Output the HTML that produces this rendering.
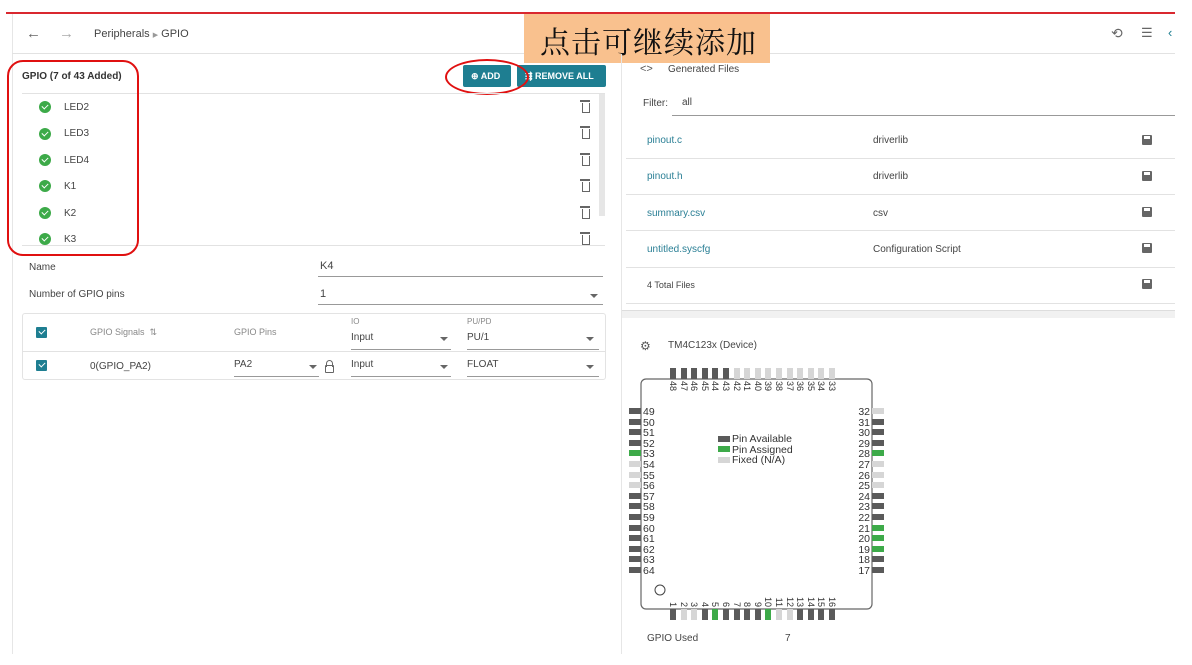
<!DOCTYPE html>
<html><head><meta charset="utf-8"><style>
*{margin:0;padding:0;box-sizing:border-box}
body{width:1192px;height:665px;background:#fff;position:relative;overflow:hidden;font-family:"Liberation Sans",sans-serif;color:#333}
.a{position:absolute}
.t{font-size:10px;color:#444}
.lnk{color:#2a7f95;font-size:10px}
.hl{height:1px;background:#e2e2e2}
.ck{width:12px;height:12px;border-radius:50%;background:#3daa49}
.ck::after{content:"";position:absolute;left:3px;top:3px;width:5px;height:3px;border-left:1.6px solid #fff;border-bottom:1.6px solid #fff;transform:rotate(-45deg)}
.tr{width:8px;height:10px;border:1.3px solid #666;border-top:none}
.tr::before{content:"";position:absolute;left:-3px;top:-3px;width:10px;height:1.5px;background:#666}
.ul{height:1px;background:#999}
.dd{width:0;height:0;border-left:4px solid transparent;border-right:4px solid transparent;border-top:4px solid #666}
.cb{width:11px;height:11px;background:#1e7e91;border-radius:1px}
.cb::after{content:"";position:absolute;left:3px;top:2px;width:5px;height:3px;border-left:1.5px solid #fff;border-bottom:1.5px solid #fff;transform:rotate(-45deg)}
.sv{width:10px;height:10px;background:#666;border-radius:1px}
.sv::after{content:"";position:absolute;left:2px;top:1px;width:6px;height:3px;background:#fff}
</style></head><body>
<div class="a" style="left:6px;top:12px;width:1169px;height:2px;background:#d9282f"></div>
<div class="a" style="left:12px;top:14px;width:1px;height:640px;background:#e6e6e6"></div>
<div class="a hl" style="left:12px;top:53px;width:1163px"></div>
<div class="a" style="left:26px;top:25px;font-size:15px;color:#666">←</div>
<div class="a" style="left:59px;top:25px;font-size:15px;color:#aaa">→</div>
<div class="a t" style="left:94px;top:28px;font-size:11px">Peripherals <span style="font-size:7px;color:#999">▶</span> GPIO</div>
<div class="a" style="left:524px;top:14px;width:246px;height:49px;background:#f9c18e"></div>
<div class="a" style="left:540px;top:18px;font-size:30px;color:#111;font-family:'Noto Serif CJK SC','Noto Sans CJK SC',serif;letter-spacing:1px">点击可继续添加</div>
<div class="a" style="left:1111px;top:25px;font-size:14px;color:#666">⟲</div>
<div class="a" style="left:1141px;top:25px;font-size:13px;color:#666">☰</div>
<div class="a" style="left:1168px;top:25px;font-size:13px;color:#1e7e91">‹</div>

<div class="a" style="left:22px;top:71px;font-size:10px;color:#333;font-weight:bold">GPIO (7 of 43 Added)</div>
<div class="a" style="left:463px;top:65px;width:48px;height:22px;background:#1e7e91;border-radius:2px;color:#fff;font-size:9px;font-weight:bold;line-height:22px;padding-left:8px">⊕ ADD</div>
<div class="a" style="left:517px;top:65px;width:89px;height:22px;background:#1e7e91;border-radius:2px;color:#fff;font-size:9px;font-weight:bold;line-height:22px;padding-left:8px">⇶ REMOVE ALL</div>
<div class="a" style="left:445px;top:59px;width:84px;height:36px;border:2px solid #e01010;border-radius:50%"></div>
<div class="a hl" style="left:22px;top:93px;width:583px"></div>
<div class="a" style="left:599px;top:94px;width:6px;height:122px;background:#e6e6e6"></div>
<div class="a ck" style="left:39px;top:101px"></div><div class="a t" style="left:64px;top:102px">LED2</div><div class="a tr" style="left:582px;top:103px"></div>
<div class="a ck" style="left:39px;top:128px"></div><div class="a t" style="left:64px;top:128px">LED3</div><div class="a tr" style="left:582px;top:129px"></div>
<div class="a ck" style="left:39px;top:154px"></div><div class="a t" style="left:64px;top:155px">LED4</div><div class="a tr" style="left:582px;top:156px"></div>
<div class="a ck" style="left:39px;top:180px"></div><div class="a t" style="left:64px;top:181px">K1</div><div class="a tr" style="left:582px;top:182px"></div>
<div class="a ck" style="left:39px;top:207px"></div><div class="a t" style="left:64px;top:208px">K2</div><div class="a tr" style="left:582px;top:209px"></div>
<div class="a ck" style="left:39px;top:233px"></div><div class="a t" style="left:64px;top:234px">K3</div><div class="a tr" style="left:582px;top:235px"></div>
<div class="a hl" style="left:22px;top:245px;width:583px"></div>
<div class="a" style="left:7px;top:60px;width:132px;height:196px;border:2px solid #e01010;border-radius:16px"></div>

<div class="a t" style="left:29px;top:262px">Name</div>
<div class="a t" style="left:320px;top:260px;font-size:11px">K4</div>
<div class="a ul" style="left:318px;top:276px;width:285px"></div>
<div class="a t" style="left:29px;top:289px">Number of GPIO pins</div>
<div class="a t" style="left:320px;top:288px;font-size:11px">1</div>
<div class="a dd" style="left:590px;top:294px"></div>
<div class="a ul" style="left:318px;top:304px;width:285px"></div>
<div class="a" style="left:22px;top:313px;width:584px;height:67px;border:1px solid #e3e3e3;border-radius:3px"></div>
<div class="a hl" style="left:22px;top:351px;width:584px"></div>
<div class="a cb" style="left:36px;top:327px"></div>
<div class="a t" style="left:90px;top:327px;color:#888;font-size:9px">GPIO Signals &nbsp;⇅</div>
<div class="a t" style="left:234px;top:327px;color:#888;font-size:9px">GPIO Pins</div>
<div class="a t" style="left:351px;top:317px;color:#888;font-size:8px">IO</div>
<div class="a t" style="left:351px;top:332px;font-size:10px">Input</div><div class="a dd" style="left:440px;top:337px"></div><div class="a ul" style="left:351px;top:349px;width:100px"></div>
<div class="a t" style="left:467px;top:317px;color:#888;font-size:8px">PU/PD</div>
<div class="a t" style="left:467px;top:332px;font-size:10px">PU/1</div><div class="a dd" style="left:586px;top:337px"></div><div class="a ul" style="left:467px;top:349px;width:132px"></div>
<div class="a cb" style="left:36px;top:360px"></div>
<div class="a t" style="left:90px;top:361px">0(GPIO_PA2)</div>
<div class="a t" style="left:234px;top:359px">PA2</div><div class="a dd" style="left:309px;top:365px"></div><div class="a ul" style="left:234px;top:376px;width:85px"></div>
<div class="a" style="left:325px;top:360px;width:9px;height:13px">
<div class="a" style="left:1px;top:0;width:7px;height:7px;border:1.3px solid #666;border-bottom:none;border-radius:4px 4px 0 0"></div>
<div class="a" style="left:0;top:5px;width:9px;height:8px;border:1.3px solid #666;border-radius:1px"></div></div>
<div class="a t" style="left:351px;top:359px">Input</div><div class="a dd" style="left:440px;top:365px"></div><div class="a ul" style="left:351px;top:376px;width:100px"></div>
<div class="a t" style="left:467px;top:359px">FLOAT</div><div class="a dd" style="left:586px;top:365px"></div><div class="a ul" style="left:467px;top:376px;width:132px"></div>

<div class="a" style="left:621px;top:54px;width:1px;height:600px;background:#e6e6e6"></div>
<div class="a" style="left:622px;top:310px;width:553px;height:8px;background:#f1f1f1;border-top:1px solid #ddd"></div>
<div class="a t" style="left:640px;top:63px;font-size:11px;color:#555">&lt;&gt;</div>
<div class="a t" style="left:668px;top:64px">Generated Files</div>
<div class="a t" style="left:643px;top:98px">Filter:</div>
<div class="a t" style="left:682px;top:97px">all</div>
<div class="a ul" style="left:672px;top:115px;width:503px"></div>
<div class="a lnk" style="left:647px;top:135px">pinout.c</div><div class="a t" style="left:873px;top:135px">driverlib</div><div class="a sv" style="left:1142px;top:135px"></div>
<div class="a hl" style="left:626px;top:158px;width:549px"></div>
<div class="a lnk" style="left:647px;top:171px">pinout.h</div><div class="a t" style="left:873px;top:171px">driverlib</div><div class="a sv" style="left:1142px;top:171px"></div>
<div class="a hl" style="left:626px;top:194px;width:549px"></div>
<div class="a lnk" style="left:647px;top:208px">summary.csv</div><div class="a t" style="left:873px;top:208px">csv</div><div class="a sv" style="left:1142px;top:207px"></div>
<div class="a hl" style="left:626px;top:230px;width:549px"></div>
<div class="a lnk" style="left:647px;top:244px">untitled.syscfg</div><div class="a t" style="left:873px;top:244px">Configuration Script</div><div class="a sv" style="left:1142px;top:243px"></div>
<div class="a hl" style="left:626px;top:267px;width:549px"></div>
<div class="a t" style="left:647px;top:280px;font-size:9px">4 Total Files</div><div class="a sv" style="left:1142px;top:279px"></div>
<div class="a hl" style="left:626px;top:303px;width:549px"></div>
<div class="a t" style="left:640px;top:339px;font-size:12px;color:#555">⚙</div>
<div class="a t" style="left:668px;top:340px">TM4C123x (Device)</div>
<div class="a t" style="left:647px;top:633px">GPIO Used</div>
<div class="a t" style="left:785px;top:633px">7</div>

<svg class="a" style="left:0;top:0" width="1192" height="665" font-family="Liberation Sans,sans-serif" font-size="10" fill="#333">
<rect x="641" y="379" width="231" height="230" rx="5" fill="#fff" stroke="#666" stroke-width="1.2"/>
<circle cx="660" cy="590" r="5" fill="none" stroke="#444"/>
<g fill="#5a5a5a">
<rect x="670" y="368" width="6" height="11"/><rect x="681" y="368" width="6" height="11"/><rect x="691" y="368" width="6" height="11"/><rect x="702" y="368" width="6" height="11"/><rect x="712" y="368" width="6" height="11"/><rect x="723" y="368" width="6" height="11"/>
<rect x="629" y="408" width="12" height="6"/><rect x="629" y="419" width="12" height="6"/><rect x="629" y="429" width="12" height="6"/><rect x="629" y="440" width="12" height="6"/>
<rect x="629" y="493" width="12" height="6"/><rect x="629" y="503" width="12" height="6"/><rect x="629" y="514" width="12" height="6"/><rect x="629" y="525" width="12" height="6"/><rect x="629" y="535" width="12" height="6"/><rect x="629" y="546" width="12" height="6"/><rect x="629" y="556" width="12" height="6"/><rect x="629" y="567" width="12" height="6"/>
<rect x="872" y="419" width="12" height="6"/><rect x="872" y="429" width="12" height="6"/><rect x="872" y="440" width="12" height="6"/>
<rect x="872" y="493" width="12" height="6"/><rect x="872" y="503" width="12" height="6"/><rect x="872" y="514" width="12" height="6"/>
<rect x="872" y="556" width="12" height="6"/><rect x="872" y="567" width="12" height="6"/>
<rect x="670" y="609" width="6" height="11"/><rect x="702" y="609" width="6" height="11"/><rect x="723" y="609" width="6" height="11"/><rect x="734" y="609" width="6" height="11"/><rect x="744" y="609" width="6" height="11"/><rect x="755" y="609" width="6" height="11"/>
<rect x="797" y="609" width="6" height="11"/><rect x="808" y="609" width="6" height="11"/><rect x="818" y="609" width="6" height="11"/><rect x="829" y="609" width="6" height="11"/>
<rect x="718" y="436" width="12" height="6"/>
</g>
<g fill="#d6d6d6">
<rect x="734" y="368" width="6" height="11"/><rect x="744" y="368" width="6" height="11"/><rect x="755" y="368" width="6" height="11"/><rect x="765" y="368" width="6" height="11"/><rect x="776" y="368" width="6" height="11"/><rect x="787" y="368" width="6" height="11"/><rect x="797" y="368" width="6" height="11"/><rect x="808" y="368" width="6" height="11"/><rect x="818" y="368" width="6" height="11"/><rect x="829" y="368" width="6" height="11"/>
<rect x="629" y="461" width="12" height="6"/><rect x="629" y="472" width="12" height="6"/><rect x="629" y="482" width="12" height="6"/>
<rect x="872" y="408" width="12" height="6"/><rect x="872" y="461" width="12" height="6"/><rect x="872" y="472" width="12" height="6"/><rect x="872" y="482" width="12" height="6"/>
<rect x="681" y="609" width="6" height="11"/><rect x="691" y="609" width="6" height="11"/><rect x="776" y="609" width="6" height="11"/><rect x="787" y="609" width="6" height="11"/>
<rect x="718" y="457" width="12" height="6"/>
</g>
<g fill="#3daa49">
<rect x="629" y="450" width="12" height="6"/><rect x="872" y="450" width="12" height="6"/>
<rect x="872" y="525" width="12" height="6"/><rect x="872" y="535" width="12" height="6"/><rect x="872" y="546" width="12" height="6"/>
<rect x="712" y="609" width="6" height="11"/><rect x="765" y="609" width="6" height="11"/>
<rect x="718" y="446" width="12" height="6"/>
</g>
<text x="732" y="442" font-size="10.5">Pin Available</text>
<text x="732" y="453" font-size="10.5">Pin Assigned</text>
<text x="732" y="463" font-size="10.5">Fixed (N/A)</text>
<g font-size="10.5">
<text x="643" y="415">49</text><text x="643" y="426">50</text><text x="643" y="436">51</text><text x="643" y="447">52</text><text x="643" y="457">53</text><text x="643" y="468">54</text><text x="643" y="479">55</text><text x="643" y="489">56</text><text x="643" y="500">57</text><text x="643" y="510">58</text><text x="643" y="521">59</text><text x="643" y="532">60</text><text x="643" y="542">61</text><text x="643" y="553">62</text><text x="643" y="563">63</text><text x="643" y="574">64</text>
<g text-anchor="end"><text x="870" y="415">32</text><text x="870" y="426">31</text><text x="870" y="436">30</text><text x="870" y="447">29</text><text x="870" y="457">28</text><text x="870" y="468">27</text><text x="870" y="479">26</text><text x="870" y="489">25</text><text x="870" y="500">24</text><text x="870" y="510">23</text><text x="870" y="521">22</text><text x="870" y="532">21</text><text x="870" y="542">20</text><text x="870" y="553">19</text><text x="870" y="563">18</text><text x="870" y="574">17</text></g>
</g>
<g font-size="9">
<text transform="translate(670,381) rotate(90)">48</text><text transform="translate(681,381) rotate(90)">47</text><text transform="translate(691,381) rotate(90)">46</text><text transform="translate(702,381) rotate(90)">45</text><text transform="translate(712,381) rotate(90)">44</text><text transform="translate(723,381) rotate(90)">43</text><text transform="translate(734,381) rotate(90)">42</text><text transform="translate(744,381) rotate(90)">41</text><text transform="translate(755,381) rotate(90)">40</text><text transform="translate(765,381) rotate(90)">39</text><text transform="translate(776,381) rotate(90)">38</text><text transform="translate(787,381) rotate(90)">37</text><text transform="translate(797,381) rotate(90)">36</text><text transform="translate(808,381) rotate(90)">35</text><text transform="translate(818,381) rotate(90)">34</text><text transform="translate(829,381) rotate(90)">33</text>
<g text-anchor="end"><text transform="translate(670,607) rotate(90)">1</text><text transform="translate(681,607) rotate(90)">2</text><text transform="translate(691,607) rotate(90)">3</text><text transform="translate(702,607) rotate(90)">4</text><text transform="translate(712,607) rotate(90)">5</text><text transform="translate(723,607) rotate(90)">6</text><text transform="translate(734,607) rotate(90)">7</text><text transform="translate(744,607) rotate(90)">8</text><text transform="translate(755,607) rotate(90)">9</text><text transform="translate(765,607) rotate(90)">10</text><text transform="translate(776,607) rotate(90)">11</text><text transform="translate(787,607) rotate(90)">12</text><text transform="translate(797,607) rotate(90)">13</text><text transform="translate(808,607) rotate(90)">14</text><text transform="translate(818,607) rotate(90)">15</text><text transform="translate(829,607) rotate(90)">16</text></g>
</g>
</svg>
</body></html>
